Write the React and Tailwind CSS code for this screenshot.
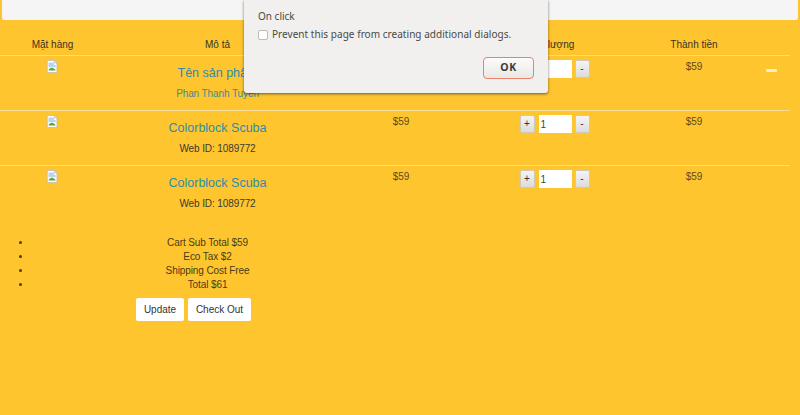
import React from "react";

const rowGrid = "grid grid-cols-[105px_225px_142px_163px_118px_37px] w-[790px]";

// the first row's price sits behind the alert in the screenshot
const items = [
  { title: "Tên sản phẩm", sub: "Phan Thanh Tuyền", subBlue: true, remove: true, hidePrice: true },
  { title: "Colorblock Scuba", sub: "Web ID: 1089772" },
  { title: "Colorblock Scuba", sub: "Web ID: 1089772" },
];

function BrokenImage() {
  return (
    <svg width="13" height="13" viewBox="0 0 16 16" className="block">
      <path d="M1.5 .5H10.5L13.5 3.5V15.5H1.5Z" fill="#fff" stroke="#b8b8b8" />
      <path d="M3 3H10V6H12V9H3Z" fill="#bcd3ef" />
      <path d="M3 13C4 10 7 9 9 10C10.5 10.5 11.5 11.5 12 13Z" fill="#5fa52e" />
      <path d="M10.5 .5V3.5H13.5" fill="#e6e6e6" stroke="#b8b8b8" />
    </svg>
  );
}

function QtyButton({ children }) {
  return (
    <button className="w-[15px] h-[18px] flex items-center justify-center rounded-[2px] border border-[#cfc9b8] bg-[linear-gradient(#f4f4f4,#dcdcdc)] text-[10px] leading-none text-[#333]">
      {children}
    </button>
  );
}

function Row({ item }) {
  return (
    <div className={`${rowGrid} h-[55px] border-t border-[#f3dd99]`}>
      <div className="flex justify-center pt-[4px]">
        <BrokenImage />
      </div>
      <div className="text-center">
        <div className="mt-[9px] text-[12.5px] leading-[16px] text-[#2b8cb0]">{item.title}</div>
        <div className={`mt-[6px] text-[10px] tracking-[-0.1px] leading-[14px] ${item.subBlue ? "text-[#3d8a9e]" : "text-[#3a3a2e]"}`}>
          {item.sub}
        </div>
      </div>
      <div className="pt-[4px] text-center text-[10px] leading-[14px] text-[#5c4a1a]">
        {!item.hidePrice && "$59"}
      </div>
      <div className="flex justify-center gap-[3px] pt-[4px] pl-[2px]">
        <QtyButton>+</QtyButton>
        <input
          readOnly
          value="1"
          className="ml-[1px] w-[33px] h-[18px] bg-white px-[2px] text-[10px] leading-none text-[#444] outline-none"
        />
        <QtyButton>-</QtyButton>
      </div>
      <div className="pt-[4px] text-center text-[10px] leading-[14px] text-[#5c4a1a]">$59</div>
      <div className="flex justify-center pt-[13px]">
        {item.remove && <span className="block w-[11px] h-[3px] rounded-[1px] bg-[#fdf0c8]" />}
      </div>
    </div>
  );
}

export default function App() {
  return (
    <div className="relative w-[800px] h-[415px] overflow-hidden bg-[#ffc52f] font-['Liberation_Sans',Arial,sans-serif] text-[#3a3320]">
      <div className="mx-[2px] h-[20px] rounded-b-[2px] bg-[#f5f5f5]" />

      <div className={`${rowGrid} mt-[18px] h-[17px] text-center text-[10px] leading-[14px]`}>
        <div>Mặt hàng</div>
        <div>Mô tả</div>
        <div />
        <div>Số lượng</div>
        <div>Thành tiền</div>
        <div />
      </div>

      {items.map((item, i) => (
        <Row key={i} item={item} />
      ))}

      <ul className="mt-[16px] w-[383px] list-disc pl-[32px] text-center text-[10px] tracking-[-0.1px] leading-[14px] text-[#4a3c14]">
        <li>Cart Sub Total $59</li>
        <li>Eco Tax $2</li>
        <li>Shipping Cost Free</li>
        <li>Total $61</li>
      </ul>

      <div className="mt-[6px] ml-[136px] flex gap-[4px] text-[10px] text-[#333]">
        <button className="h-[23px] w-[48px] rounded-[2px] bg-white">Update</button>
        <button className="h-[23px] w-[63px] rounded-[2px] bg-white">Check Out</button>
      </div>

      {/* browser alert, sits on top of the page */}
      <div className="absolute left-[244px] top-0 w-[304px] h-[93px] rounded-b-[3px] bg-[#f1f0ee] shadow-[0_1px_3px_rgba(0,0,0,0.55)] font-['Noto_Sans',sans-serif] text-[10px] text-[#4a4a46]">
        <div className="ml-[14px] mt-[9px] leading-[15px]">On click</div>
        <label className="ml-[14px] mt-[3px] flex items-center gap-[4px] leading-[15px] tracking-[0.04px]">
          <span className="block w-[10px] h-[10px] rounded-[2px] border border-[#bdbab5] bg-white" />
          Prevent this page from creating additional dialogs.
        </label>
        <div className="mt-[15px] mr-[14px] flex justify-end">
          <button className="w-[51px] h-[22px] rounded-[4px] border border-[#e8826a] bg-[linear-gradient(#fbfbfa,#e9e8e5)] text-[10.5px] font-bold tracking-[0.5px] text-[#3c3c3c]">
            OK
          </button>
        </div>
      </div>
    </div>
  );
}
